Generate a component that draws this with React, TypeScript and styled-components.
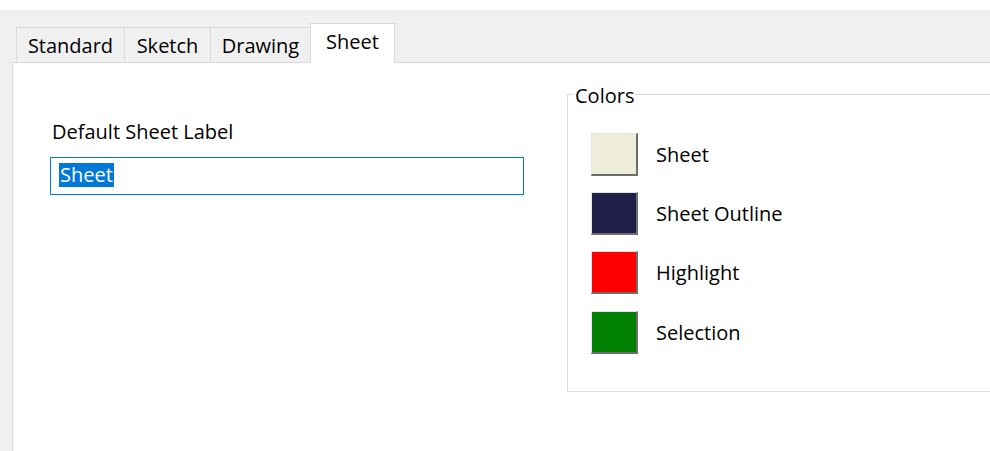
import React from "react";
import styled, { createGlobalStyle } from "styled-components";

const GlobalStyle = createGlobalStyle`
  html, body {
    margin: 0;
    padding: 0;
    background: #ffffff;
    overflow: hidden;
  }
  body {
    font-family: "Open Sans", "Noto Sans", "Liberation Sans", sans-serif;
    color: #000000;
  }
`;

const Page = styled.div`
  width: 990px;
  height: 451px;
  padding-top: 10px;
  box-sizing: border-box;
  display: flex;
  flex-direction: column;
  overflow: hidden;
`;

const Dialog = styled.div`
  flex: 1;
  display: flex;
  flex-direction: column;
  background: #f0f0f0;
  padding-left: 12px;
  min-height: 0;
`;

const TabStrip = styled.div`
  height: 52px;
  display: flex;
  align-items: flex-end;
  padding-left: 4px;
  box-sizing: border-box;
  position: relative;
  z-index: 1;
`;

const Tab = styled.div<{ $w: number; $active?: boolean }>`
  box-sizing: border-box;
  width: ${(p) => p.$w}px;
  height: ${(p) => (p.$active ? 40 : 35)}px;
  margin-bottom: ${(p) => (p.$active ? -1 : 0)}px;
  border-top: 1px solid #d9d9d9;
  border-left: 1px solid #d9d9d9;
  border-right: ${(p) => (p.$active ? "1px solid #d9d9d9" : "none")};
  background: ${(p) => (p.$active ? "#ffffff" : "#f0f0f0")};
  font-size: 20px;
  line-height: 24px;
  padding-top: ${(p) => (p.$active ? 6 : 6)}px;
  text-align: center;
  white-space: nowrap;
`;

const Pane = styled.div`
  flex: 1;
  background: #ffffff;
  border-top: 1px solid #d9d9d9;
  border-left: 1px solid #d9d9d9;
  display: flex;
  align-items: flex-start;
  padding-left: 37px;
  min-height: 0;
`;

const LeftColumn = styled.div`
  width: 474px;
  flex-shrink: 0;
  padding-top: 57px;
  display: flex;
  flex-direction: column;
`;

const FieldLabel = styled.div`
  font-size: 20px;
  line-height: 24px;
  padding-left: 2px;
  margin-bottom: 13px;
  white-space: nowrap;
`;

const TextBox = styled.div`
  box-sizing: border-box;
  height: 38px;
  border: 1px solid #0078d7;
  display: flex;
  align-items: center;
  padding-left: 8px;
  padding-bottom: 3px;
  font-size: 20px;
`;

const Selected = styled.span`
  background: #0078d7;
  color: #ffffff;
  line-height: 24px;
  height: 24px;
  padding: 0 1px;
`;

const RightColumn = styled.div`
  margin-left: 43px;
  padding-top: 18px;
  flex-shrink: 0;
  width: 460px;
`;

const GroupBox = styled.fieldset`
  margin: 0;
  padding: 0;
  border: 1px solid #dcdcdc;
  border-right: none;
`;

const GroupLegend = styled.legend`
  font-size: 20px;
  line-height: 24px;
  padding: 3px 1px 0;
  margin-left: 6px;
`;

const ColorList = styled.div`
  display: flex;
  flex-direction: column;
  gap: 16px;
  padding: 25px 0 37px 23px;
`;

const ColorRow = styled.div<{ $nudge?: number }>`
  display: flex;
  align-items: center;
  height: 43px;
  margin-top: ${(p) => p.$nudge ?? 0}px;
`;

const Swatch = styled.div<{ $color: string }>`
  box-sizing: border-box;
  width: 47px;
  height: 43px;
  background: ${(p) => p.$color};
  border-top: 1px solid #e3e3e3;
  border-left: 1px solid #e3e3e3;
  border-right: 2px solid #6d6d6d;
  border-bottom: 2px solid #6d6d6d;
  flex-shrink: 0;
`;

const ColorName = styled.span`
  font-size: 20px;
  line-height: 24px;
  margin-left: 18px;
  white-space: nowrap;
`;

const tabs = [
  { label: "Standard", w: 108 },
  { label: "Sketch", w: 86 },
  { label: "Drawing", w: 100 },
  { label: "Sheet", w: 85, active: true },
];

const colors = [
  { name: "Sheet", color: "#ededd9" },
  { name: "Sheet Outline", color: "#1f1f47" },
  { name: "Highlight", color: "#ff0000" },
  { name: "Selection", color: "#008000", nudge: 1 },
];

export default function App() {
  return (
    <>
      <GlobalStyle />
      <Page>
        <Dialog>
          <TabStrip>
            {tabs.map((t) => (
              <Tab key={t.label} $w={t.w} $active={t.active}>
                {t.label}
              </Tab>
            ))}
          </TabStrip>
          <Pane>
            <LeftColumn>
              <FieldLabel>Default Sheet Label</FieldLabel>
              <TextBox>
                <Selected>Sheet</Selected>
              </TextBox>
            </LeftColumn>
            <RightColumn>
              <GroupBox>
                <GroupLegend>Colors</GroupLegend>
                <ColorList>
                  {colors.map((c) => (
                    <ColorRow key={c.name} $nudge={c.nudge}>
                      <Swatch $color={c.color} />
                      <ColorName>{c.name}</ColorName>
                    </ColorRow>
                  ))}
                </ColorList>
              </GroupBox>
            </RightColumn>
          </Pane>
        </Dialog>
      </Page>
    </>
  );
}
